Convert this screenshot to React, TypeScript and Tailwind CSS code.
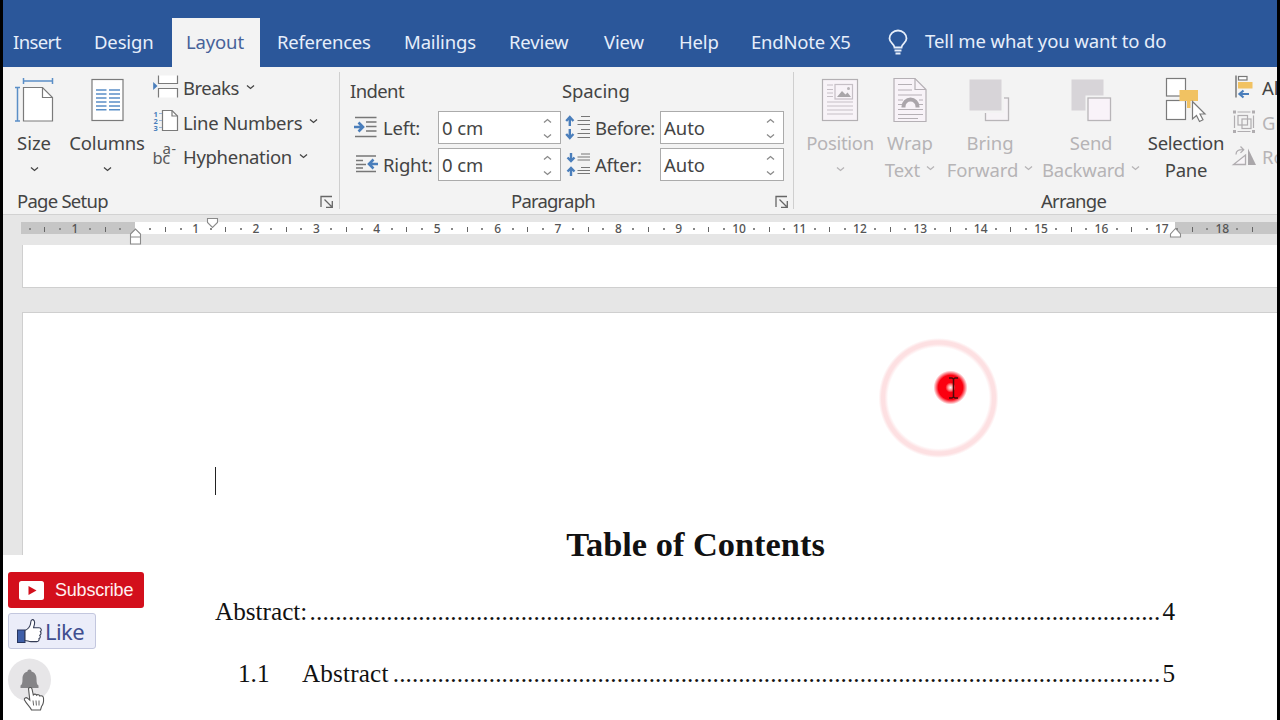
import type { ReactNode } from "react";
import clsx from "clsx";

const tabs = [
  { label: "Insert", box: "w-[77px] pl-[10px] tracking-[-0.6px]" },
  { label: "Design", box: "w-[92px] pl-[14px]" },
  { label: "Layout", box: "w-[88px] pl-[14px]" },
  { label: "References", box: "w-[130px] pl-[17px] tracking-[-0.25px]" },
  { label: "Mailings", box: "w-[105px] pl-[14px]" },
  { label: "Review", box: "w-[95px] pl-[14px]" },
  { label: "View", box: "w-[75px] pl-[14px]" },
  { label: "Help", box: "w-[72px] pl-[14px]" },
  { label: "EndNote X5", box: "w-[151px] pl-[14px] tracking-[-0.2px]" }
];

const rulerNumbers = [-1, 0, 1, 2, 3, 4, 5, 6, 7, 8, 9, 10, 11, 12, 13, 14, 15, 16, 17, 18];

function Chevron({ up = false, className = "" }: { up?: boolean; className?: string }) {
  return (
    <svg className={clsx("h-[6px] w-[9px] shrink-0", className)} viewBox="0 0 9 6" fill="none" stroke="currentColor" strokeWidth="1.3">
      <path d={up ? "M1 4.5 4.5 1.5 8 4.5" : "M1 1.5 4.5 4.5 8 1.5"} />
    </svg>
  );
}

function Launcher() {
  return (
    <svg className="h-[14px] w-[14px]" viewBox="0 0 14 14" fill="none" stroke="#666" strokeWidth="1.3">
      <path d="M1 12V1.5h11M4.5 4.5l7 7M12.3 6v6.3H6" />
    </svg>
  );
}

function BigButton({ icon, label, second, arrow = true, className }: { icon: ReactNode; label: string; second?: string; arrow?: boolean; className: string }) {
  return (
    <div className={clsx("flex shrink-0 flex-col items-center pt-[9px] leading-[26px] whitespace-nowrap", className)}>
      <div className="h-[54px]">{icon}</div>
      <p className="h-[27px]">{label}</p>
      <div className="flex h-[27px] items-start">
        {second && <span>{second}</span>}
        {arrow && <Chevron className={second ? "mt-[8px] ml-[6px]" : "mt-[9px]"} />}
      </div>
    </div>
  );
}

function SmallButton({ icon, label, className = "" }: { icon: ReactNode; label: string; className?: string }) {
  return (
    <div className={clsx("flex h-[34.5px] items-center whitespace-nowrap", className)}>
      <div className="mr-[3px] w-[28px] shrink-0">{icon}</div>
      <span>{label}</span>
      <Chevron className="-mt-[3px] ml-[7px]" />
    </div>
  );
}

function Field({ icon, label, value, labelClass, boxClass }: { icon: ReactNode; label: string; value: string; labelClass: string; boxClass: string }) {
  return (
    <div className="flex h-[33px] items-center whitespace-nowrap">
      {icon}
      <span className={labelClass}>{label}</span>
      <div className={clsx("flex h-[33px] items-center justify-between border border-[#ababab] bg-white pr-[8px] pl-[3px] pt-[1px]", boxClass)}>
        <span>{value}</span>
        <div className="flex flex-col gap-[9px] text-[#8a8a8a]">
          <Chevron up />
          <Chevron />
        </div>
      </div>
    </div>
  );
}

function SizeIcon() {
  return (
    <svg className="h-[48px] w-[44px]" viewBox="0 0 44 48" fill="none">
      <path d="M11.5 5h29M11.5 2v6M40.5 2v6M5.5 11.5v33.5M3 11.5h5M3 45h5" stroke="#5b8fc7" strokeWidth="1.5" />
      <path d="M11.5 11.5h19l10 10v23.5h-29z" fill="#fff" stroke="#7a7a7a" strokeWidth="1.2" />
      <path d="M30.5 11.5v10h10" stroke="#7a7a7a" strokeWidth="1.2" />
    </svg>
  );
}

function ColumnsIcon() {
  return (
    <svg className="h-[48px] w-[44px]" viewBox="0 0 44 48">
      <rect x="7" y="3.5" width="31" height="41" fill="#fff" stroke="#7a7a7a" strokeWidth="1.2" />
      <path d="M11 14h10.500M24 14h11M11 18h10.500M24 18h11M11 22h10.500M24 22h11M11 26h10.500M24 26h11M11 30h10.500M24 30h11M11 33.7h10.500M24 33.7h11" stroke="#5b8fc7" strokeWidth="1.4" />
    </svg>
  );
}

function BreaksIcon() {
  return (
    <svg className="h-[28px] w-[28px]" viewBox="0 0 28 28" fill="none">
      <path d="M6.5 1.5v8h19v-8zM6.5 23.5v-9h19v9z" fill="#fff" />
      <path d="M6.5 1.5v8h19v-8M6.5 23.5v-9h19v9" stroke="#7a7a7a" strokeWidth="1.2" />
      <path d="M1.2 8l4.3 4-4.3 4z" fill="#4a7ebb" />
    </svg>
  );
}

function LineNumbersIcon() {
  return (
    <svg className="h-[28px] w-[28px] overflow-visible" viewBox="0 0 28 28" fill="none">
      <path d="M10.5 1.5h9.5l5.5 5.5v14.500h-15z" fill="#fff" stroke="#7a7a7a" strokeWidth="1.2" />
      <path d="M20 1.5v5.500h5.500" stroke="#7a7a7a" strokeWidth="1.2" />
      <path d="M7 4.500h3M7 11.500h3M7 18.500h3" stroke="#9ab4d6" strokeWidth="1" />
      <g fill="#4a7ebb" fontSize="7.500" fontWeight="700" fontFamily="Noto Sans, sans-serif">
        <text x="1.500" y="7.500">1</text>
        <text x="1.500" y="14.500">2</text>
        <text x="1.500" y="21.500">3</text>
      </g>
    </svg>
  );
}

function HyphenationIcon() {
  return (
    <svg className="h-[28px] w-[28px] overflow-visible" viewBox="0 0 28 28">
      <g fill="#5a5a5a" fontSize="16" fontFamily="Noto Sans, sans-serif">
        <text x="0.500" y="21" textLength="17.500" lengthAdjust="spacingAndGlyphs">bc</text>
        <text x="10.500" y="11" fontSize="15">a</text>
        <text x="19.500" y="11" fontSize="14">-</text>
      </g>
    </svg>
  );
}

function IndentIcon({ right = false }: { right?: boolean }) {
  return (
    <svg className="ml-[4px] h-[24px] w-[24px] shrink-0" viewBox="0 0 24 24" fill="none">
      {right ? (
        <>
          <path d="M2 3h20M2 7.500h7M2 11.500h10M2 15h7M2 18.500h20" stroke="#777" strokeWidth="1.3" />
          <rect x="13.500" y="5.500" width="10" height="11" fill="#f3f3f3" />
          <path d="M24 11h-8M19.500 6.500l-4.500 4.500 4.500 4.500" stroke="#4a7ebb" strokeWidth="2.6" />
        </>
      ) : (
        <>
          <path d="M1 1.500h21.500M12 6h10.500M12 10.500h10.500M12 15h10.500M1 20.500h21.500" stroke="#777" strokeWidth="1.3" />
          <path d="M0 11h8.500M4.500 6.500l4.500 4.500-4.500 4.500" stroke="#4a7ebb" strokeWidth="2.6" />
        </>
      )}
    </svg>
  );
}

function SpacingIcon({ after = false }: { after?: boolean }) {
  return (
    <svg className="ml-[3px] h-[26px] w-[26px] shrink-0" viewBox="0 0 26 26" fill="none">
      {after ? (
        <>
          <path d="M16 2h9M12.500 5h12.500M12.500 8h12.500M16 15.500h9M12.500 18.500h12.500M12.500 21.500h12.500" stroke="#777" strokeWidth="1.2" />
          <path d="M6 1v7M2.500 5.500l3.500 3.500 3.500-3.500M6 24v-7M2.500 19.500l3.500-3.500 3.500 3.500" stroke="#4a7ebb" strokeWidth="2.400" />
        </>
      ) : (
        <>
          <path d="M16 1.500h9M12.500 5.500h12.500M12.500 9.500h12.500M16 14.500h9M12.500 18.500h12.500M12.500 22.500h12.500" stroke="#777" strokeWidth="1.2" />
          <path d="M4.800 11v-8M1.200 6l3.600-4 3.600 4M4.800 14v8M1.200 19l3.600 4 3.600-4" stroke="#4a7ebb" strokeWidth="2.400" />
        </>
      )}
    </svg>
  );
}

function PositionIcon() {
  return (
    <svg className="h-[48px] w-[44px]" viewBox="0 0 44 48" fill="none" stroke="#c6bfc6" strokeWidth="1.2">
      <rect x="4.5" y="3.500" width="35" height="41" fill="#f8f3f8" stroke="#b3b0b3" />
      <path d="M9 9h6M9 13.500h6M9 17h6M9 20.500h6M9 26h26M9 30h26M9 34h26M9 38h26" />
      <rect x="17" y="8.500" width="17.500" height="14.500" fill="#f8f3f8" />
      <path d="M19 21l5-6 3.500 3.500 2-2 3.500 4.500z" fill="#aaa6aa" stroke="none" />
      <circle cx="30.500" cy="12.500" r="1.500" fill="#b8b4b8" stroke="none" />
    </svg>
  );
}

function WrapIcon() {
  return (
    <svg className="h-[48px] w-[44px]" viewBox="0 0 44 48" fill="none" stroke="#b5b0b5" strokeWidth="1.2">
      <path d="M6 2.500h21l11 11v32h-32z" fill="#f8f3f8" />
      <path d="M27 2.500v11h11M10 8.500h14M10 14h14M10 19h24M10 24h5M31 24h4M10 28.500h4M31 28.500h4M10 33.500h25M10 38.500h25M10 42.500h20" />
      <path d="M15.500 31.500v-1a7 7 0 0 1 14 0v1" stroke="#aaa5aa" strokeWidth="4" />
    </svg>
  );
}

function ForwardIcon() {
  return (
    <svg className="h-[48px] w-[44px]" viewBox="0 0 44 48">
      <rect x="17.500" y="22" width="23" height="22.500" fill="#f6f3f6" stroke="#b8b5b8" strokeWidth="1.300" />
      <rect x="1" y="3" width="35" height="34" fill="#f3f3f3" />
      <rect x="1.500" y="3.500" width="32" height="31" fill="#d7d4d8" />
    </svg>
  );
}

function BackwardIcon() {
  return (
    <svg className="h-[48px] w-[44px]" viewBox="0 0 44 48">
      <rect x="2.500" y="3.500" width="32" height="31" fill="#d7d4d8" />
      <rect x="16.500" y="19.500" width="25" height="26" fill="#f3f3f3" />
      <rect x="19" y="22" width="22.500" height="22.500" fill="#f9f3f9" stroke="#b8b5b8" strokeWidth="1.300" />
    </svg>
  );
}

function SelectionIcon() {
  return (
    <svg className="h-[48px] w-[44px]" viewBox="0 0 44 48" stroke="#7a7a7a" strokeWidth="1.2">
      <rect x="2.500" y="2.500" width="19" height="17.500" fill="#fff" />
      <rect x="2.500" y="24.500" width="19" height="19" fill="#fff" />
      <path d="M15.500 14h18.500v11h-7.500v7h-3.500v-7h-7.500z" fill="#f1c262" stroke="none" />
      <path d="M28.500 25.500v17.500l4-3.500 3 6 3.500-1.700-3-5.800h5z" fill="#fff" />
    </svg>
  );
}

function AlignIcon() {
  return (
    <svg className="h-[28px] w-[26px]" viewBox="0 0 26 28" fill="none">
      <path d="M5 1.500v22" stroke="#777" strokeWidth="1.500" />
      <rect x="7.500" y="2.500" width="8.500" height="3.500" fill="#fff" stroke="#777" strokeWidth="1.200" />
      <rect x="7" y="8" width="14.500" height="6.500" fill="#f1c262" />
      <path d="M18 20h-9M12.500 16.500l-4 3.500 4 3.500" stroke="#4a7ebb" strokeWidth="2.200" />
    </svg>
  );
}

function GroupIcon() {
  return (
    <svg className="h-[28px] w-[26px]" viewBox="0 0 26 28" fill="none" stroke="#b0adb0" strokeWidth="1.2">
      <path d="M6.500 3h13M6.500 22.500h13M3.500 6.500v12.500M22.500 6.500v12.500" />
      <rect x="7" y="6.500" width="9.500" height="9.500" />
      <rect x="11" y="10" width="9" height="9.500" />
      <path d="M2 1.500h3v3h-3zM21 1.500h3v3h-3zM2 21h3v3h-3zM21 21h3v3h-3z" fill="#b0adb0" stroke="none" />
    </svg>
  );
}

function RotateIcon() {
  return (
    <svg className="h-[28px] w-[26px]" viewBox="0 0 26 28" fill="none" stroke="#b0adb0" strokeWidth="1.300">
      <path d="M14.500 12v9.500h-12z" fill="#f8f5f8" />
      <path d="M17 5.500v16.500h8z" fill="#aaa7aa" stroke="none" />
      <path d="M5 11.500c0-4 3-5 7-4.800M9.500 3.500l3.200 3.200-3.200 3.200" />
    </svg>
  );
}

function Ribbon() {
  return (
    <div className="flex h-[148px] border-b border-[#d2d2d2] bg-[#f3f3f3] text-[18.5px] tracking-[-0.05px] text-[#444]">
      <div className="flex w-[336px] shrink-0 flex-col">
        <div className="flex h-[122px]">
          <BigButton className="w-[62px]" icon={<SizeIcon />} label="Size" />
          <BigButton className="w-[84px] tracking-[-0.2px]" icon={<ColumnsIcon />} label="Columns" />
          <div className="pt-[4px] pl-[3px]">
            <SmallButton className="tracking-[-0.5px]" icon={<BreaksIcon />} label="Breaks" />
            <SmallButton className="tracking-[-0.25px]" icon={<LineNumbersIcon />} label="Line Numbers" />
            <SmallButton className="tracking-[-0.3px]" icon={<HyphenationIcon />} label="Hyphenation" />
          </div>
        </div>
        <div className="flex h-[25px] justify-between pr-[5px] pl-[14px] leading-[24px] tracking-[-0.75px]">
          <span>Page Setup</span>
          <div className="pt-[6px]">
            <Launcher />
          </div>
        </div>
      </div>

      <div className="my-[5px] w-px bg-[#cfcfcf]" />

      <div className="flex w-[453px] shrink-0 flex-col">
        <div className="flex h-[122px] pt-[12px] pl-[10px]">
          <div className="flex w-[212px] shrink-0 flex-col gap-[4px]">
            <p className="mb-[4px] h-[24px] leading-[24px] tracking-[-0.6px]">Indent</p>
            <Field icon={<IndentIcon />} label="Left:" value="0 cm" labelClass="w-[60px] pl-[5px] tracking-[-0.2px]" boxClass="w-[123px]" />
            <Field icon={<IndentIcon right />} label="Right:" value="0 cm" labelClass="w-[60px] pl-[5px] tracking-[-0.2px]" boxClass="w-[123px]" />
          </div>
          <div className="flex w-[224px] shrink-0 flex-col gap-[4px]">
            <p className="mb-[4px] h-[24px] leading-[24px] tracking-[-0.1px]">Spacing</p>
            <Field icon={<SpacingIcon />} label="Before:" value="Auto" labelClass="w-[69px] pl-[4px] tracking-[-0.4px]" boxClass="w-[124px]" />
            <Field icon={<SpacingIcon after />} label="After:" value="Auto" labelClass="w-[69px] pl-[4px] tracking-[-0.2px]" boxClass="w-[124px]" />
          </div>
        </div>
        <div className="flex h-[25px] justify-between pr-[4px] pl-[171px] leading-[24px] tracking-[-0.8px]">
          <span>Paragraph</span>
          <div className="pt-[6px]">
            <Launcher />
          </div>
        </div>
      </div>

      <div className="my-[5px] w-px bg-[#cfcfcf]" />

      <div className="flex min-w-0 flex-1 flex-col overflow-hidden">
        <div className="flex h-[122px] pl-[9px]">
          <BigButton className="w-[74px] tracking-[-0.3px] text-[#b6b4b6]" icon={<PositionIcon />} label="Position" />
          <BigButton className="w-[66px] text-[#b6b4b6]" icon={<WrapIcon />} label="Wrap" second="Text" />
          <BigButton className="w-[94px] text-[#b6b4b6]" icon={<ForwardIcon />} label="Bring" second="Forward" />
          <BigButton className="w-[108px] tracking-[-0.2px] text-[#b6b4b6]" icon={<BackwardIcon />} label="Send" second="Backward" />
          <BigButton className="w-[82px] tracking-[-0.25px]" icon={<SelectionIcon />} label="Selection" second="Pane" arrow={false} />
          <div className="w-[60px] shrink-0 pt-[4px] pl-[4px]">
            <SmallButton icon={<AlignIcon />} label="Align" />
            <SmallButton className="text-[#b6b4b6]" icon={<GroupIcon />} label="Group" />
            <SmallButton className="text-[#b6b4b6]" icon={<RotateIcon />} label="Rotate" />
          </div>
        </div>
        <p className="h-[25px] pl-[247px] leading-[24px] tracking-[-0.75px]">Arrange</p>
      </div>
    </div>
  );
}

function Tick({ bar = false }: { bar?: boolean }) {
  return (
    <div className="flex w-[15.1px] shrink-0 items-center justify-center pt-[2px]">
      <div className={bar ? "h-[5px] w-px bg-[#666]" : "h-[2px] w-[2px] bg-[#888]"} />
    </div>
  );
}

function Ruler() {
  return (
    <div className="relative h-[30px] pt-[7px] pl-[18px]">
      <div className="flex h-[12px] overflow-hidden bg-[linear-gradient(90deg,#c6c6c6_114px,#fff_114px,#fff_1154px,#c6c6c6_1154px)] pl-[1px] text-[12px] leading-[13px] font-medium text-[#555]">
        <Tick />
        <Tick bar />
        {rulerNumbers.map((n) => (
          <div key={n} className="flex w-[60.4px] shrink-0">
            <Tick />
            <div className="flex w-[15.1px] shrink-0 justify-center">{n !== 0 && <span>{Math.abs(n)}</span>}</div>
            <Tick />
            <Tick bar />
          </div>
        ))}
      </div>
      <svg className="absolute top-[13px] left-[126px] h-[17px] w-[13px]" viewBox="0 0 13 17" fill="#fff" stroke="#8a8a8a" strokeWidth="1.100">
        <path d="M1.500 9V6l5-5 5 5v3zM1.500 9h10v7h-10z" />
      </svg>
      <svg className="absolute top-[2px] left-[203px] h-[12px] w-[13px]" viewBox="0 0 13 12" fill="#fff" stroke="#8a8a8a" strokeWidth="1.100">
        <path d="M1.500 1.500h10v4l-5 5-5-5z" />
      </svg>
      <svg className="absolute top-[12px] left-[1166px] h-[11px] w-[13px]" viewBox="0 0 13 11" fill="#fff" stroke="#8a8a8a" strokeWidth="1.100">
        <path d="M1.500 10V7l5-5.500 5 5.500v3z" />
      </svg>
    </div>
  );
}

function TocLine({ title, dots, page, className }: { title: ReactNode; dots: number; page: number; className: string }) {
  return (
    <div className={clsx("flex h-[30px] w-[960px] text-[25.2px] leading-[30px] whitespace-nowrap", className)}>
      {title}
      <span className="ml-auto tracking-[0.1px]">{".".repeat(dots)}</span>
      <span className="ml-[2px]">{page}</span>
    </div>
  );
}

function DocumentArea() {
  return (
    <div className="h-[505px] bg-[#e6e6e6]">
      <Ruler />
      <div className="ml-[19px] h-[43px] border-b border-l border-[#cfcfcf] bg-white" />
      <div className="mt-[24px] ml-[19px] h-[408px] border-t border-l border-[#cfcfcf] bg-white pt-[154px] pl-[192px] font-['Liberation_Serif','Times_New_Roman',serif] text-[#111]">
        <div className="h-[28px] w-px bg-[#222]" />
        <h1 className="mt-[29px] h-[40px] w-[961px] text-center text-[34.4px] leading-[40px] font-bold">Table of Contents</h1>
        <TocLine className="mt-[33px]" title={<span>Abstract:</span>} dots={133} page={4} />
        <TocLine
          className="mt-[32px] pl-[23px]"
          title={
            <>
              <span className="w-[64px]">1.1</span>
              <span className="tracking-[0.15px]">Abstract</span>
            </>
          }
          dots={120}
          page={5}
        />
      </div>
    </div>
  );
}

function SocialButtons() {
  return (
    <div className="absolute bottom-0 left-[3px] h-[165px] w-[20px] bg-white pt-[17px] pl-[5px]">
      <div className="flex h-[36px] w-[136px] items-center rounded-[3px] bg-[#d30f1c] pl-[11px] font-['Liberation_Sans',Arial,sans-serif] text-[18px] tracking-[-0.2px] text-[#fff0f0]">
        <svg className="mr-[11px] h-[19px] w-[25px]" viewBox="0 0 25 19">
          <rect width="25" height="19" rx="2.500" fill="#fff" />
          <path d="M9.500 5v9l8-4.500z" fill="#d30f1c" />
        </svg>
        Subscribe
      </div>
      <div className="mt-[5px] flex h-[36px] w-[88px] items-center rounded-[3px] border border-[#c3c7de] bg-[#ebedf9] pl-[8px] text-[22px] tracking-[-0.6px] text-[#3f4f8f]">
        <svg className="mr-px h-[26px] w-[27px] shrink-0" viewBox="0 0 27 26">
          <rect x="0.500" y="12" width="7.500" height="12.500" fill="#3f5fa8" stroke="#26355f" />
          <path d="M8 12.500c3-1.500 5-4 5.500-6.500.3-2 .2-4 1.500-4.300 2-.4 3 2 2.500 4.300-.3 1.700-.9 3-.9 3.800h5.400c2.500 0 3 2.800 1.300 3.900 1.200 1 .8 3-.5 3.600.9 1 .5 2.800-.8 3.300.4 1.600-.5 3-2.200 3H14c-2.500 0-3.500-1.100-6-1.100z" fill="#fff" stroke="#333b55" strokeWidth="1.100" />
        </svg>
        Like
      </div>
      <svg className="mt-[9px] h-[58px] w-[44px]" viewBox="0 0 44 58">
        <circle cx="21.500" cy="22" r="21.500" fill="#e7e6e8" />
        <path d="M21.500 11.500c1.300 0 2 .8 2 2 3.500.9 5 3.700 5 7.500 0 4 .5 5.500 2 6.500v2.500h-18v-2.500c1.500-1 2-2.500 2-6.500 0-3.800 1.500-6.600 5-7.500 0-1.200.7-2 2-2z" fill="#858487" />
        <path d="M20.500 30.500c1-1.500 3-1.300 3.500.5l1.300 6c.9-1.300 2.700-1.200 3.300.2 1-1 2.700-.7 3.200.8 1.600-.7 3.500.2 3.700 2 .3 3.500.2 6-2 8.500l-1 3.500h-9c-1.500-3.500-5-6-7-10-.7-2 1.500-3 3-1.800l2.300 2z" fill="#fff" stroke="#555" strokeWidth="1.100" />
        <path d="M25 42.500l.6 5M28 42.500l.4 5M31 42.500v5" stroke="#666" />
      </svg>
    </div>
  );
}

function ClickMarker() {
  return (
    <svg className="absolute top-[336px] left-[876px] h-[126px] w-[126px]" viewBox="0 0 126 126">
      <defs>
        <radialGradient id="dot">
          <stop offset="0" stopColor="#fff" />
          <stop offset="0.150" stopColor="#ff9090" />
          <stop offset="0.300" stopColor="#fb0010" />
          <stop offset="0.720" stopColor="#fb0010" />
          <stop offset="1" stopColor="#fb0010" stopOpacity="0" />
        </radialGradient>
        <radialGradient id="ring">
          <stop offset="0.840" stopColor="#fde0e2" stopOpacity="0" />
          <stop offset="0.900" stopColor="#fde0e2" />
          <stop offset="0.950" stopColor="#fde0e2" />
          <stop offset="1" stopColor="#fde0e2" stopOpacity="0" />
        </radialGradient>
      </defs>
      <circle cx="62.500" cy="62" r="60" fill="url(#ring)" />
      <circle cx="74.500" cy="51.500" r="17" fill="url(#dot)" />
      <path d="M73 42h3l1.500 1 1.500-1h3M77.500 43v18M73 62h3l1.500-1 1.500 1h3" fill="none" stroke="#4a0a0a" strokeWidth="1.500" />
    </svg>
  );
}

function App() {
  return (
    <div className="relative h-[720px] w-[1280px] overflow-hidden bg-black px-[3px] font-['Noto_Sans','Segoe_UI',sans-serif]">
      <div className="flex h-[67px] items-end bg-[#2b579a] text-[18.5px] tracking-[-0.15px] text-[#e6eefa]">
        {tabs.map((tab) => (
          <div
            key={tab.label}
            className={clsx("h-[49px] shrink-0 leading-[47px] whitespace-nowrap", tab.box, tab.label === "Layout" && "bg-[#f3f3f3] text-[#476299]")}
          >
            {tab.label}
          </div>
        ))}
        <svg className="mb-[10px] h-[28px] w-[20px]" viewBox="0 0 20 28" fill="none" stroke="#e6eefa" strokeWidth="1.800">
          <path d="M6.500 18.500c0-4-5-4.500-5-9a8.500 8 0 0 1 17 0c0 4.500-5 5-5 9zM6.500 21.500h7M7.500 24.500h5" />
        </svg>
        <span className="ml-[17px] h-[49px] leading-[46px] tracking-[-0.1px] whitespace-nowrap">Tell me what you want to do</span>
      </div>
      <Ribbon />
      <DocumentArea />
      <SocialButtons />
      <ClickMarker />
    </div>
  );
}

export default App;
